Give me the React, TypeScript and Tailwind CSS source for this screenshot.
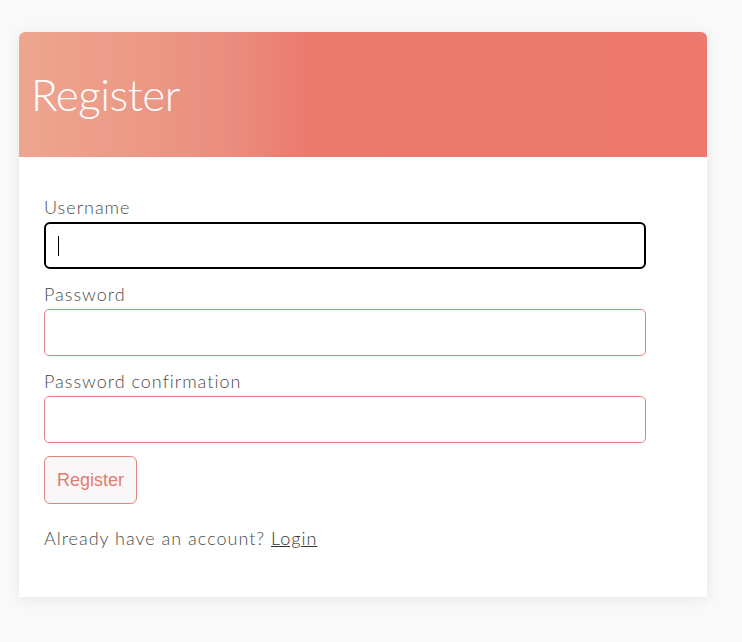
export default function App() {
  return (
    <div className="min-h-[642px] w-full bg-[#f9f9f9] pt-[32px] pl-[19px]">
      <div className="w-[688px] rounded-t-[6px] bg-white shadow-[0_2px_14px_rgba(0,0,0,0.08)]">
        <div className="flex h-[125px] items-center rounded-t-[6px] bg-[linear-gradient(to_right,#eea690_0%,#eb8e80_30%,#ec796e_42%,#ec786e_100%)] pl-[12px]">
          <h1 className="-mt-[2px] font-['Lato',sans-serif] text-[44px] font-light tracking-[-0.5px] text-white">
            Register
          </h1>
        </div>
        <form className="flex flex-col px-[25px] pt-[38px] pb-[47px] font-['Lato',sans-serif] text-[18px] font-light tracking-[1px] text-[#4a4a4a]">
          <label className="leading-[24px]">Username</label>
          <div className="mt-[3px] flex h-[47px] w-[602px] items-center rounded-[6px] border-2 border-black pl-[12px]">
            <span className="h-[20px] w-px bg-black" />
          </div>
          <label className="mt-[13px] leading-[24px]">Password</label>
          <input
            type="password"
            className="mt-[3px] h-[47px] w-[602px] rounded-[5px] border border-[#e0867c] outline-none"
          />
          <label className="mt-[13px] leading-[24px]">Password confirmation</label>
          <input
            type="password"
            className="mt-[3px] h-[47px] w-[602px] rounded-[5px] border border-[#e0867c] outline-none"
          />
          <div className="mt-[13px]">
            <button
              type="button"
              className="h-[48px] w-[93px] rounded-[6px] border border-[#e0867c] bg-[#f9f7f7] font-['Liberation_Sans',sans-serif] text-[18px] font-normal tracking-normal text-[#e57b70]"
            >
              Register
            </button>
          </div>
          <p className="mt-[22px] leading-[24px]">
            Already have an account?{" "}
            <a href="#" className="text-[#333] underline">
              Login
            </a>
          </p>
        </form>
      </div>
    </div>
  );
}
